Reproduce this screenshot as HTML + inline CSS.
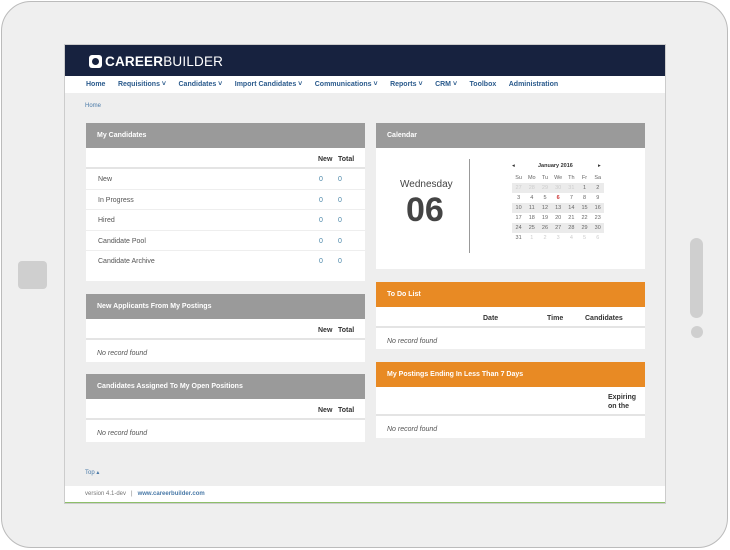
<!DOCTYPE html>
<html><head><style>
*{margin:0;padding:0;box-sizing:border-box}
body{width:730px;height:550px;background:#fff;font-family:"Liberation Sans",sans-serif;position:relative;overflow:hidden}
.frame{position:absolute;left:1px;top:1px;width:727px;height:547px;border:1.5px solid #bbb;border-radius:30px;background:#efefef}
.lbtn{position:absolute;left:18px;top:261px;width:29px;height:28px;background:#cfcfcf;border-radius:4px}
.pill{position:absolute;left:690px;top:238px;width:13px;height:80px;background:#cfcfcf;border-radius:7px}
.dot{position:absolute;left:691px;top:326px;width:12px;height:12px;background:#cfcfcf;border-radius:50%}
.screen{position:absolute;left:64px;top:44px;width:602px;height:460px;background:#eeeeee;border:1px solid #ccc;overflow:hidden}
.hdr{position:absolute;left:0;top:0;width:100%;height:31px;background:#17223f}
.logo{position:absolute;left:24px;top:9px;color:#fff;font-size:13.5px;letter-spacing:.2px}
.logo b{font-weight:bold}
.logo span{font-weight:normal}
.ic{display:inline-block;width:13px;height:13px;background:#fff;border-radius:3px;vertical-align:-2px;margin-right:3px;position:relative}
.ic:after{content:"";position:absolute;left:3px;top:3px;width:7px;height:7px;border-radius:50%;background:#17223f}
.nav{position:absolute;left:0;top:31px;width:100%;height:17px;background:#fff;font-size:7px;color:#2a5a8c;font-weight:bold;line-height:17px;padding-left:21px;white-space:nowrap}
.nav span{margin-right:12.5px}
.crumb{position:absolute;left:20px;top:58px;font-size:6px;color:#4a7aa8}
.panel{position:absolute;background:#fff}
.ph{height:25px;background:#9a9a9a;color:#fff;font-size:7px;font-weight:bold;line-height:25px;padding-left:11px}
.ph.o{background:#e88a24}
.th{height:21px;border-bottom:2px solid #e4e4e4;font-size:7px;font-weight:bold;color:#333;position:relative}
.th span{position:absolute;top:8px}
.row{height:20.5px;border-bottom:1px solid #eee;font-size:7px;color:#555;line-height:21px;padding-left:12px;position:relative}
.row i{font-style:normal;position:absolute;color:#4a86a8}
.nr{font-size:7px;font-style:italic;color:#555;padding:10px 11px}
.cal td{font-size:5.5px;color:#666;text-align:center;width:13.2px;height:10px}
.cal tr.g td{background:#ebebeb}
.cal td.l{color:#ccc}
.foot{position:absolute;left:0;top:441px;width:100%;height:18px;background:#fff;border-bottom:2px solid #8dbf6a;font-size:6px;color:#4a7aa8;line-height:16px;padding-left:20px}
</style></head><body>
<div class="frame"></div>
<div class="lbtn"></div><div class="pill"></div><div class="dot"></div>
<div class="screen">
 <div class="hdr"><div class="logo"><span class="ic"></span><b>CAREER</b><span>BUILDER</span></div></div>
 <div class="nav"><span>Home</span><span>Requisitions ˅</span><span>Candidates ˅</span><span>Import Candidates ˅</span><span>Communications ˅</span><span>Reports ˅</span><span>CRM ˅</span><span>Toolbox</span><span>Administration</span></div>
 <div class="crumb">Home</div>

 <div class="panel" style="left:21px;top:78px;width:279px;height:158px">
  <div class="ph">My Candidates</div>
  <div class="th"><span style="left:232px">New</span><span style="left:252px">Total</span></div>
  <div class="row">New<i style="left:233px">0</i><i style="left:252px">0</i></div>
  <div class="row">In Progress<i style="left:233px">0</i><i style="left:252px">0</i></div>
  <div class="row">Hired<i style="left:233px">0</i><i style="left:252px">0</i></div>
  <div class="row">Candidate Pool<i style="left:233px">0</i><i style="left:252px">0</i></div>
  <div class="row" style="border:0">Candidate Archive<i style="left:233px">0</i><i style="left:252px">0</i></div>
 </div>
 <div class="panel" style="left:21px;top:249px;width:279px;height:68px">
  <div class="ph">New Applicants From My Postings</div>
  <div class="th"><span style="left:232px">New</span><span style="left:252px">Total</span></div>
  <div class="nr">No record found</div>
 </div>
 <div class="panel" style="left:21px;top:329px;width:279px;height:68px">
  <div class="ph">Candidates Assigned To My Open Positions</div>
  <div class="th"><span style="left:232px">New</span><span style="left:252px">Total</span></div>
  <div class="nr">No record found</div>
 </div>

 <div class="panel" style="left:311px;top:78px;width:269px;height:146px">
  <div class="ph">Calendar</div>
  <div style="position:absolute;left:24px;top:56px;font-size:10px;color:#444">Wednesday</div>
  <div style="position:absolute;left:30px;top:68px;font-size:34px;font-weight:bold;color:#444">06</div>
  <div style="position:absolute;left:93px;top:36px;width:1px;height:94px;background:#999"></div>
  <div style="position:absolute;left:136px;top:40px;font-size:5.5px;color:#333;width:92px"><span style="position:absolute;left:0">◂</span><span style="position:absolute;left:26px;font-weight:bold">January 2016</span><span style="position:absolute;left:86px">▸</span></div>
  <table class="cal" style="position:absolute;left:136px;top:50px;border-collapse:collapse">
   <tr><td>Su</td><td>Mo</td><td>Tu</td><td>We</td><td>Th</td><td>Fr</td><td>Sa</td></tr>
   <tr class="g"><td class="l">27</td><td class="l">28</td><td class="l">29</td><td class="l">30</td><td class="l">31</td><td>1</td><td>2</td></tr>
   <tr><td>3</td><td>4</td><td>5</td><td style="color:#c33;font-weight:bold">6</td><td>7</td><td>8</td><td>9</td></tr>
   <tr class="g"><td>10</td><td>11</td><td>12</td><td>13</td><td>14</td><td>15</td><td>16</td></tr>
   <tr><td>17</td><td>18</td><td>19</td><td>20</td><td>21</td><td>22</td><td>23</td></tr>
   <tr class="g"><td>24</td><td>25</td><td>26</td><td>27</td><td>28</td><td>29</td><td>30</td></tr>
   <tr><td>31</td><td class="l">1</td><td class="l">2</td><td class="l">3</td><td class="l">4</td><td class="l">5</td><td class="l">6</td></tr>
  </table>
 </div>
 <div class="panel" style="left:311px;top:237px;width:269px;height:67px">
  <div class="ph o">To Do List</div>
  <div class="th"><span style="left:107px">Date</span><span style="left:171px">Time</span><span style="left:209px">Candidates</span></div>
  <div class="nr">No record found</div>
 </div>
 <div class="panel" style="left:311px;top:317px;width:269px;height:76px">
  <div class="ph o">My Postings Ending In Less Than 7 Days</div>
  <div class="th" style="height:29px"><span style="left:232px;top:6px;line-height:9px">Expiring<br>on the</span></div>
  <div class="nr">No record found</div>
 </div>

 <div style="position:absolute;left:20px;top:424px;font-size:6px;color:#4a7aa8">Top ▴</div>
 <div class="foot"><span style="color:#777">version 4.1-dev &nbsp; | &nbsp;</span> <b>www.careerbuilder.com</b></div>
</div>
</body></html>
